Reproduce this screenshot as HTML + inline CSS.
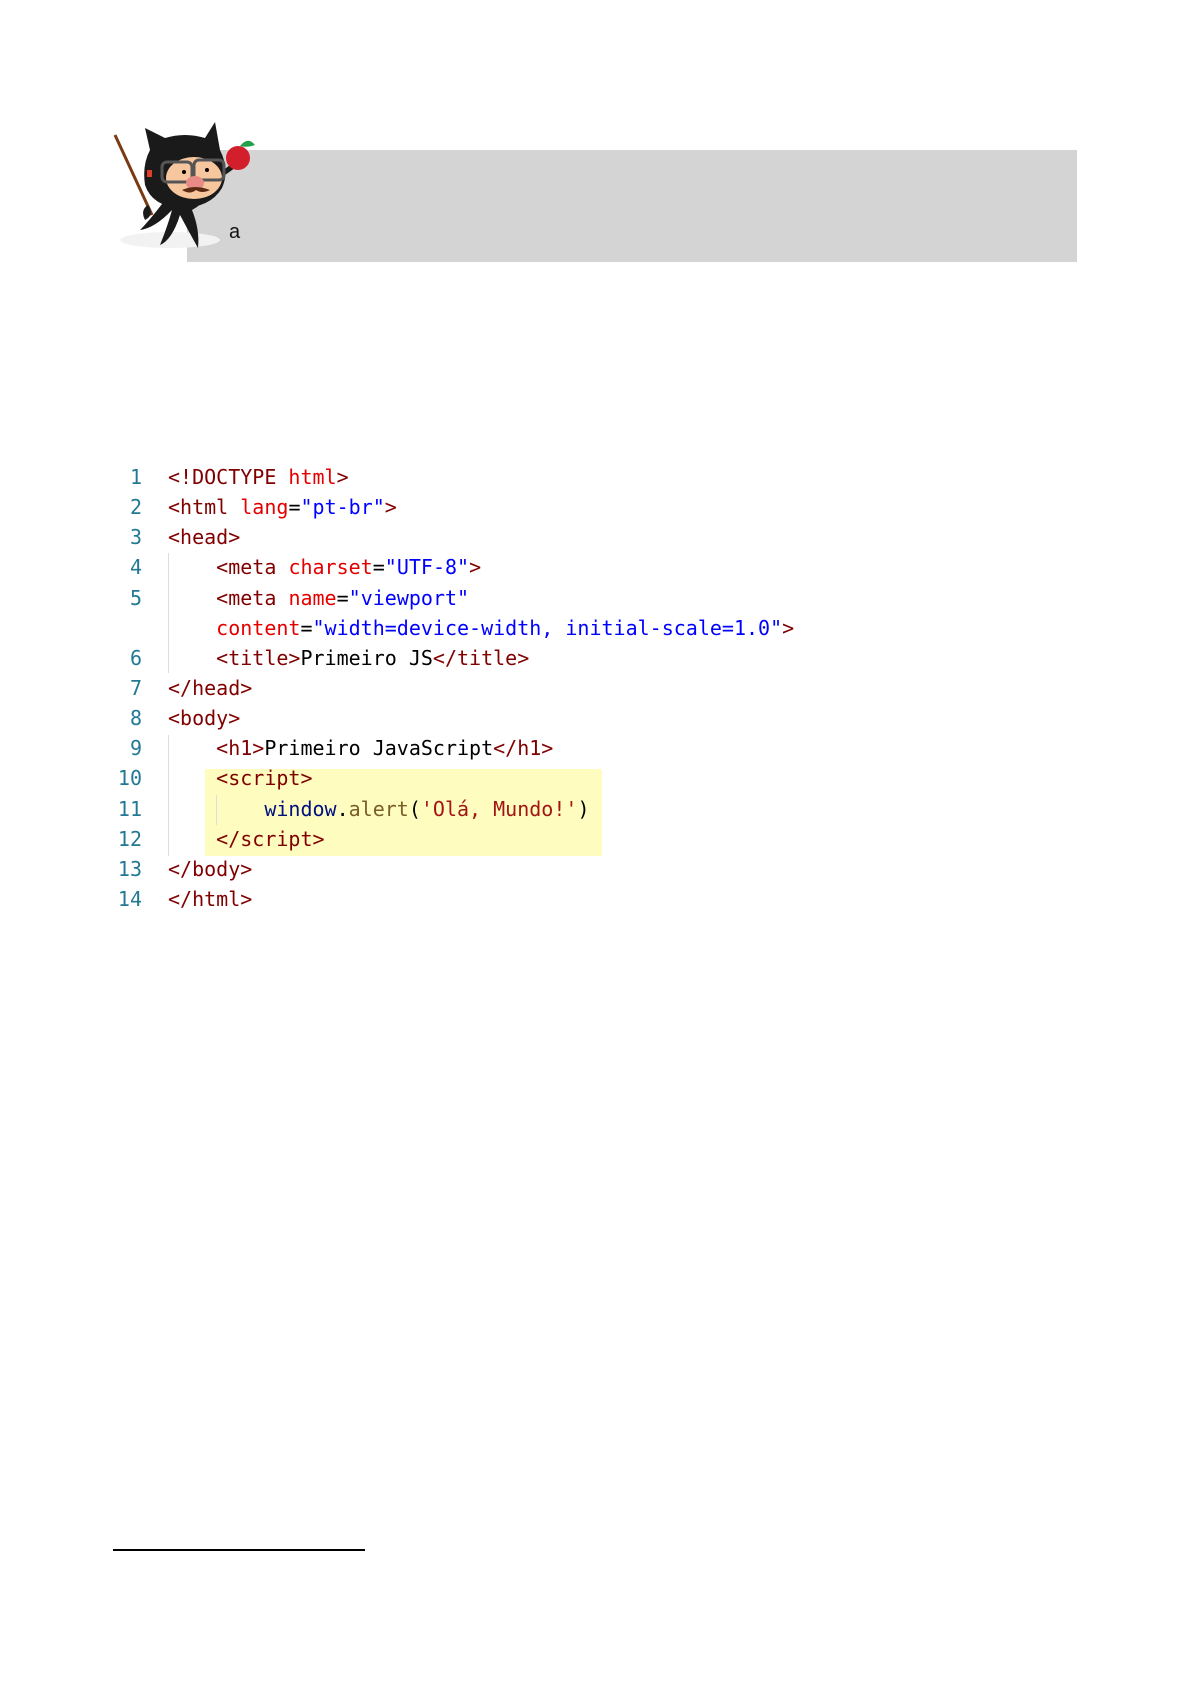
<!DOCTYPE html>
<html><head><meta charset="utf-8"><style>
body{margin:0;width:1191px;height:1684px;background:#fff;position:relative;overflow:hidden}
.box{position:absolute;left:187px;top:150px;width:890px;height:112px;background:#d4d4d4}
.a{position:absolute;left:229px;top:221px;font:20px "Liberation Sans",sans-serif;color:#111}
.hl{position:absolute;left:205px;top:769px;width:397px;height:87px;background:#fefcbf}
.g{position:absolute;width:1px;background:#ddd}
.code{position:absolute;left:0;top:462px;width:1191px;font:20px/30.15px "DejaVu Sans Mono",monospace}
.row{position:relative;height:30.15px;width:1191px}
.n{position:absolute;left:0;width:142px;color:#237893;text-align:right;white-space:pre}
.t{position:absolute;left:168px;white-space:pre}
.k{color:#800000}.r{color:#e50000}.b{color:#0000ff}.x{color:#000}.d{color:#001080}.f{color:#795e26}.s{color:#a31515}
.foot{position:absolute;left:113px;top:1549px;width:252px;height:2px;background:#000}
</style></head><body>
<div class="box"></div>
<svg style="position:absolute;left:110px;top:120px" width="150" height="130" viewBox="0 0 150 130">
<ellipse cx="60" cy="120" rx="50" ry="8" fill="#f2f2f2"/>
<line x1="5" y1="15" x2="42" y2="95" stroke="#7a3b12" stroke-width="3"/>
<path d="M55 80 Q40 100 30 110 Q45 108 62 90 Q58 105 50 125 Q62 120 70 95 Q78 110 88 128 Q90 110 82 90 Q100 80 115 55 L125 48 L120 45 Q100 60 90 70 Z" fill="#1a1a1a"/>
<path d="M38 85 Q45 95 35 100 Q30 90 38 85Z" fill="#1a1a1a"/>
<path d="M40 30 L35 8 L55 18 Q75 12 95 18 L105 2 L110 30 Q120 50 112 68 Q100 88 70 88 Q42 86 35 65 Q32 45 40 30Z" fill="#1a1a1a"/>
<ellipse cx="84" cy="58" rx="28" ry="21" fill="#f6c79f"/>
<rect x="52" y="42" width="30" height="20" rx="5" fill="none" stroke="#555" stroke-width="3"/>
<rect x="84" y="40" width="30" height="20" rx="5" fill="none" stroke="#555" stroke-width="3"/>
<ellipse cx="85" cy="63" rx="9" ry="7" fill="#e88a86"/>
<path d="M72 70 Q85 64 100 70 Q92 74 86 70 Q80 75 72 70Z" fill="#5a2a12"/>
<circle cx="74" cy="52" r="2" fill="#000"/><circle cx="97" cy="50" r="2" fill="#000"/>
<rect x="37" y="50" width="5" height="7" fill="#e0402a"/>
<circle cx="128" cy="38" r="12" fill="#d21f2b"/>
<path d="M130 26 Q138 16 145 25 Q137 28 130 26Z" fill="#22a04a"/>
</svg>
<div class="a">a</div>
<div class="hl"></div>
<div class="g" style="left:168px;top:553px;height:120px"></div>
<div class="g" style="left:168px;top:735px;height:121px"></div>
<div class="g" style="left:216px;top:795px;height:30px"></div>
<div class="code"><div class="row"><span class="n">1</span><span class="t"><span class="k">&lt;!DOCTYPE</span> <span class="r">html</span><span class="k">&gt;</span></span></div><div class="row"><span class="n">2</span><span class="t"><span class="k">&lt;html</span> <span class="r">lang</span><span class="x">=</span><span class="b">"pt-br"</span><span class="k">&gt;</span></span></div><div class="row"><span class="n">3</span><span class="t"><span class="k">&lt;head&gt;</span></span></div><div class="row"><span class="n">4</span><span class="t">    <span class="k">&lt;meta</span> <span class="r">charset</span><span class="x">=</span><span class="b">"UTF-8"</span><span class="k">&gt;</span></span></div><div class="row"><span class="n">5</span><span class="t">    <span class="k">&lt;meta</span> <span class="r">name</span><span class="x">=</span><span class="b">"viewport"</span></span></div><div class="row"><span class="t">    <span class="r">content</span><span class="x">=</span><span class="b">"width=device-width, initial-scale=1.0"</span><span class="k">&gt;</span></span></div><div class="row"><span class="n">6</span><span class="t">    <span class="k">&lt;title&gt;</span><span class="x">Primeiro JS</span><span class="k">&lt;/title&gt;</span></span></div><div class="row"><span class="n">7</span><span class="t"><span class="k">&lt;/head&gt;</span></span></div><div class="row"><span class="n">8</span><span class="t"><span class="k">&lt;body&gt;</span></span></div><div class="row"><span class="n">9</span><span class="t">    <span class="k">&lt;h1&gt;</span><span class="x">Primeiro JavaScript</span><span class="k">&lt;/h1&gt;</span></span></div><div class="row"><span class="n">10</span><span class="t">    <span class="k">&lt;script&gt;</span></span></div><div class="row"><span class="n">11</span><span class="t">        <span class="d">window</span><span class="x">.</span><span class="f">alert</span><span class="x">(</span><span class="s">'Olá, Mundo!'</span><span class="x">)</span></span></div><div class="row"><span class="n">12</span><span class="t">    <span class="k">&lt;/script&gt;</span></span></div><div class="row"><span class="n">13</span><span class="t"><span class="k">&lt;/body&gt;</span></span></div><div class="row"><span class="n">14</span><span class="t"><span class="k">&lt;/html&gt;</span></span></div></div>
<div class="foot"></div>
</body></html>
